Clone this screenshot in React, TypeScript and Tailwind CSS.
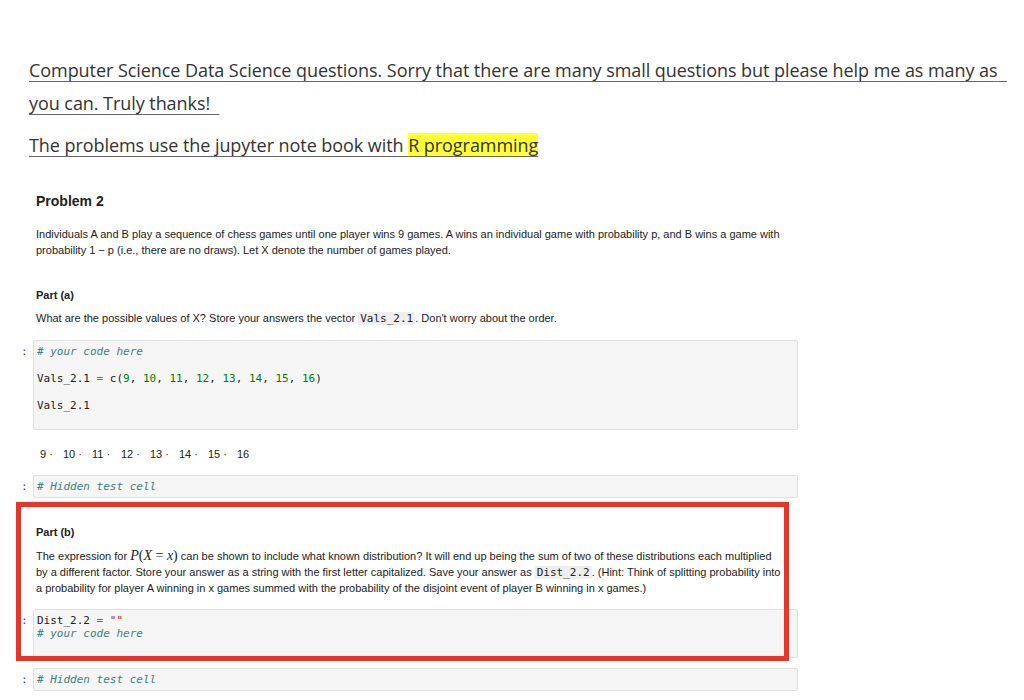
export default function App() {
  const mono = "font-['DejaVu_Sans_Mono','Liberation_Mono',monospace]";
  const sans = "font-['Liberation_Sans',Arial,sans-serif]";
  const serif = "font-['Liberation_Serif',serif] text-[14px] leading-none";
  return (
    <div className={`relative w-[1024px] h-[700px] overflow-hidden bg-white ${sans}`}>
      {/* question header, Word-ish */}
      <div className="pl-[29px] pt-[54px] font-['Open_Sans',sans-serif] text-[18px] tracking-[-0.06px] text-[#333]">
        <div className="leading-[33px] underline decoration-[#666] underline-offset-[4px] whitespace-pre">
          Computer Science Data Science questions. Sorry that there are many small questions but please help me as many as{'  '}
        </div>
        <div className="leading-[33px] underline decoration-[#666] underline-offset-[4px] whitespace-pre">
          you can. Truly thanks!{'  '}
        </div>
        <div className="mt-[12px] leading-[27px] underline decoration-[#666] underline-offset-[4px]">
          The problems use the jupyter note book with <span className="bg-[#ffff33]">R programming</span>
        </div>
      </div>

      {/* notebook */}
      <div className="mt-[34px] pl-[33px] w-[798px] text-[#222]">
        <div className="pl-[3px]">
          <div className="text-[14px] font-bold leading-[16px]">Problem 2</div>
          <div className="mt-[17px] text-[11px] leading-[16px]">
            Individuals A and B play a sequence of chess games until one player wins 9 games. A wins an individual game with probability p, and B wins a game with
            <br />
            probability 1 − p (i.e., there are no draws). Let X denote the number of games played.
          </div>
          <div className="mt-[29px] text-[11px] font-bold leading-[16px]">Part (a)</div>
          <div className="mt-[7px] text-[11px] leading-[16px]">
            What are the possible values of X? Store your answers the vector{' '}
            <span className={`${mono} text-[11px] leading-none bg-[#eeeeee] px-[2px] rounded-[2px]`}>Vals_2.1</span>. Don't worry about the order.
          </div>
        </div>

        {/* code cell 1 */}
        <div className="relative mt-[14px]">
          <span className={`absolute left-[-12px] top-[4px] ${mono} text-[11px] text-[#303f9f]`}>:</span>
          <div className={`h-[90px] bg-[#f5f5f5] border border-[#e0e0e0] rounded-[2px] pl-[3px] pt-[4px] ${mono} text-[11px] text-[#222]`}>
            <div className="leading-[14px] italic text-[#408080]"># your code here</div>
            <div className="mt-[13px] leading-[14px]">
              Vals_2.1 <span className="text-[#aa22ff]">=</span> c(<span className="text-[#008000]">9</span>, <span className="text-[#008000]">10</span>, <span className="text-[#008000]">11</span>, <span className="text-[#008000]">12</span>, <span className="text-[#008000]">13</span>, <span className="text-[#008000]">14</span>, <span className="text-[#008000]">15</span>, <span className="text-[#008000]">16</span>)
            </div>
            <div className="mt-[13px] leading-[14px]">Vals_2.1</div>
          </div>
        </div>

        {/* output */}
        <div className="mt-[16px] pl-[7px] text-[11px] leading-[16px] flex">
          {[9, 10, 11, 12, 13, 14, 15].map((n) => (
            <span key={n} className={n === 9 ? 'w-[23px]' : 'w-[29px]'}>
              {n} ·
            </span>
          ))}
          <span>16</span>
        </div>

        {/* hidden test cell */}
        <div className="relative mt-[13px]">
          <span className={`absolute left-[-12px] top-[4px] ${mono} text-[11px] text-[#303f9f]`}>:</span>
          <div className={`h-[23px] bg-[#f5f5f5] border border-[#e0e0e0] rounded-[2px] pl-[3px] pt-[4px] ${mono} text-[11px] leading-[14px] italic text-[#408080]`}>
            # Hidden test cell
          </div>
        </div>

        {/* part b */}
        <div className="pl-[3px] mt-[26px]">
          <div className="text-[11px] font-bold leading-[16px]">Part (b)</div>
          <div className="mt-[8px] text-[11px] leading-[16px] whitespace-nowrap">
            The expression for{' '}
            <span className={`${serif} italic`}>P</span>
            <span className={serif}>(</span>
            <span className={`${serif} italic`}>X</span>
            <span className={serif}> = </span>
            <span className={`${serif} italic`}>x</span>
            <span className={serif}>)</span> can be shown to include what known distribution? It will end up being the sum of two of these distributions each multiplied
            <br />
            by a different factor. Store your answer as a string with the first letter capitalized. Save your answer as{' '}
            <span className={`${mono} text-[11px] leading-none bg-[#eeeeee] px-[2px] rounded-[2px]`}>Dist_2.2</span>. (Hint: Think of splitting probability into
            <br />
            a probability for player A winning in x games summed with the probability of the disjoint event of player B winning in x games.)
          </div>
        </div>

        {/* code cell 3 */}
        <div className="relative mt-[13px]">
          <span className={`absolute left-[-12px] top-[4px] ${mono} text-[11px] text-[#303f9f]`}>:</span>
          <div className={`h-[49px] bg-[#f5f5f5] border border-[#e0e0e0] rounded-[2px] pl-[3px] pt-[4px] ${mono} text-[11px] leading-[13px] text-[#222]`}>
            <div>
              Dist_2.2 <span className="text-[#aa22ff]">=</span> <span className="text-[#ba2121]">""</span>
            </div>
            <div className="italic text-[#408080]"># your code here</div>
          </div>
        </div>

        {/* hidden test cell 2 */}
        <div className="relative mt-[10px]">
          <span className={`absolute left-[-12px] top-[4px] ${mono} text-[11px] text-[#303f9f]`}>:</span>
          <div className={`h-[23px] bg-[#f5f5f5] border border-[#e0e0e0] rounded-[2px] pl-[3px] pt-[4px] ${mono} text-[11px] leading-[14px] italic text-[#408080]`}>
            # Hidden test cell
          </div>
        </div>
      </div>

      {/* red highlight box drawn over part b */}
      <div className="absolute left-[16px] top-[502px] w-[773px] h-[159px] border-[5px] border-[#e8352a] pointer-events-none" />
    </div>
  );
}
